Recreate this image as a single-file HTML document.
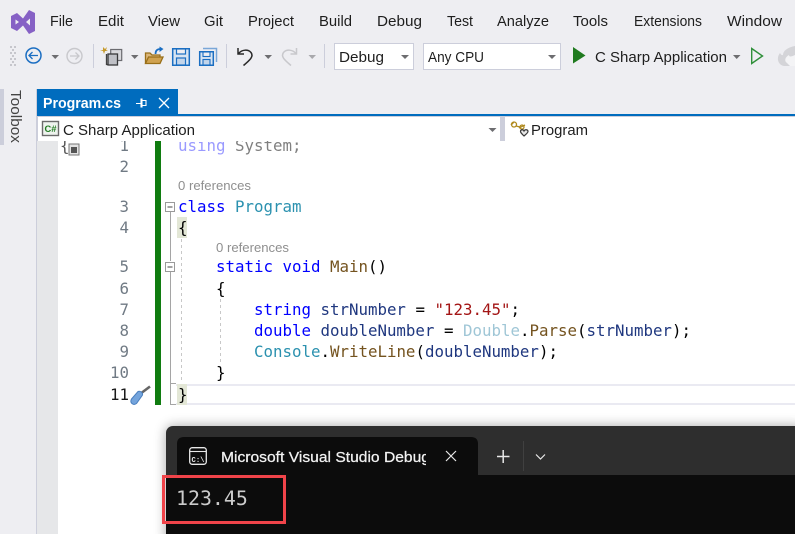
<!DOCTYPE html>
<html><head><meta charset="utf-8"><style>
html,body{margin:0;padding:0;width:795px;height:534px;overflow:hidden;background:#fff}
svg{display:block}
.u{font-family:"Liberation Sans",sans-serif;font-size:14.5px;fill:#1e1e1e}
.m{font-family:"DejaVu Sans Mono","Liberation Mono",monospace;font-size:15.78px}
.n{fill:#707a84;text-anchor:end}
.r{font-family:"Liberation Sans",sans-serif;font-size:12.5px;fill:#8f8f8f}
</style></head><body>
<svg width="795" height="534" viewBox="0 0 795 534" xmlns="http://www.w3.org/2000/svg">
<defs>
<filter id="sh" x="-10%" y="-30%" width="120%" height="160%"><feGaussianBlur stdDeviation="6"/></filter>
<clipPath id="codeclip"><rect x="37" y="141" width="758" height="393"/></clipPath>
<clipPath id="titleclip"><rect x="215" y="440" width="211" height="32"/></clipPath>
</defs>
<rect width="795" height="534" fill="#eeeef2"/>

<!-- menu -->
<g class="u">
<text x="50" y="26" textLength="23" lengthAdjust="spacingAndGlyphs">File</text>
<text x="98" y="26" textLength="26" lengthAdjust="spacingAndGlyphs">Edit</text>
<text x="148" y="26" textLength="32" lengthAdjust="spacingAndGlyphs">View</text>
<text x="204" y="26" textLength="19" lengthAdjust="spacingAndGlyphs">Git</text>
<text x="248" y="26" textLength="46" lengthAdjust="spacingAndGlyphs">Project</text>
<text x="319" y="26" textLength="33" lengthAdjust="spacingAndGlyphs">Build</text>
<text x="377" y="26" textLength="45" lengthAdjust="spacingAndGlyphs">Debug</text>
<text x="447" y="26" textLength="26" lengthAdjust="spacingAndGlyphs">Test</text>
<text x="497" y="26" textLength="52" lengthAdjust="spacingAndGlyphs">Analyze</text>
<text x="573" y="26" textLength="35" lengthAdjust="spacingAndGlyphs">Tools</text>
<text x="634" y="26" textLength="68" lengthAdjust="spacingAndGlyphs">Extensions</text>
<text x="727" y="26" textLength="55" lengthAdjust="spacingAndGlyphs">Window</text>
</g>

<!-- VS logo -->
<path d="M11 16 L17 13 L23 18.500 L29 10 L35 13 V31 L29 34 L23 25.500 L17 31 L11 28 Z M15.500 19.500 V24.500 L19 22 Z M26 22 L30 25.500 V18.500 Z" fill="#8661c5" fill-rule="evenodd"/>

<!-- grip -->
<g fill="#c6c6cc">
<rect x="10" y="46" width="2" height="2"/><rect x="14" y="46" width="2" height="2"/>
<rect x="12" y="49" width="2" height="2"/>
<rect x="10" y="52" width="2" height="2"/><rect x="14" y="52" width="2" height="2"/>
<rect x="12" y="55" width="2" height="2"/>
<rect x="10" y="58" width="2" height="2"/><rect x="14" y="58" width="2" height="2"/>
<rect x="12" y="61" width="2" height="2"/>
<rect x="10" y="64" width="2" height="2"/><rect x="14" y="64" width="2" height="2"/>
</g>

<!-- back / forward -->
<circle cx="33.5" cy="55.5" r="7.5" fill="none" stroke="#1b6ec2" stroke-width="1.5"/>
<path d="M38 55.5 H29 M32.5 52 L29 55.5 L32.5 59" fill="none" stroke="#1b6ec2" stroke-width="1.3"/>
<path d="M51.5 55 H59 L55.2 59 Z" fill="#6d6d70"/>
<circle cx="74.5" cy="56" r="7.5" fill="none" stroke="#c8c8cc" stroke-width="1.4"/>
<path d="M70 56 H79 M75.5 52.5 L79 56 L75.5 59.5" fill="none" stroke="#c8c8cc" stroke-width="1.3"/>
<rect x="93" y="44" width="1" height="24" fill="#cccedb"/>

<!-- new project -->
<path d="M103 47 l2 2 l2-2 l-1 3 l2 1 l-3 0 l-1 3 l-1-3 l-3 0 l3-1z" fill="#c69a2c"/>
<path d="M106.500 54 V64.500 H109" fill="none" stroke="#424242" stroke-width="1.300"/>
<rect x="110.700" y="49.500" width="11" height="11" fill="#d8d8dc" stroke="#6b6b70" stroke-width="1.200"/>
<rect x="108" y="54" width="9.500" height="11" fill="#bfc0c6" stroke="#38383a" stroke-width="1.300"/>
<path d="M131 55 H138.500 L134.700 59 Z" fill="#6d6d70"/>

<!-- open folder -->
<path d="M145.500 63.500 V53 H150 L152 55 H160 V57" fill="#dcb67a" stroke="#996f19" stroke-width="1.300"/>
<path d="M145.500 63.500 L148.500 57 H163 L160 63.500 Z" fill="#d0a250" stroke="#996f19" stroke-width="1.300"/>
<path d="M155.500 54 C155.500 50.500 157.500 49 160.500 49" fill="none" stroke="#1b6ec2" stroke-width="1.700"/>
<path d="M159.500 46.500 L163.500 49 L159.500 52 Z" fill="#1b6ec2"/>

<!-- save -->
<path d="M172.700 48.700 H189.300 V65.300 H172.700 Z" fill="#d7e4f2" stroke="#1b6ec2" stroke-width="1.500"/>
<rect x="176.500" y="49" width="9" height="5" fill="#eeeef2" stroke="#1b6ec2" stroke-width="1.200"/>
<rect x="176.500" y="58" width="9" height="7" fill="#c3d5ea" stroke="#1b6ec2" stroke-width="1.200"/>

<!-- save all -->
<path d="M203 48.500 H216.500 V62 " fill="none" stroke="#7aa7d8" stroke-width="1.500"/>
<path d="M199.700 51.700 H213.300 V65.300 H199.700 Z" fill="#d7e4f2" stroke="#1b6ec2" stroke-width="1.500"/>
<rect x="203" y="52" width="7" height="4.500" fill="#eeeef2" stroke="#1b6ec2" stroke-width="1.100"/>
<rect x="203" y="59.500" width="7" height="5.500" fill="#c3d5ea" stroke="#1b6ec2" stroke-width="1.100"/>
<rect x="226" y="44" width="1" height="24" fill="#cccedb"/>

<!-- undo -->
<path d="M238 48 V54 H244 M238.500 53.500 C242 49.500 248 49 251 52.500 C254 56.500 250 60 243.500 65.500" fill="none" stroke="#2a2a2a" stroke-width="1.500"/>
<path d="M264.500 55 H272 L268.200 59 Z" fill="#6d6d70"/>
<!-- redo -->
<path d="M296.500 48 V54 H290.500 M296 53.500 C292.500 49.500 286.500 49 283.500 52.500 C280.500 56.500 284.500 60 291 65.500" fill="none" stroke="#c8c8cc" stroke-width="1.500"/>
<path d="M308.500 55 H316 L312.200 59 Z" fill="#a8a8ac"/>
<rect x="324" y="44" width="1" height="24" fill="#cccedb"/>

<!-- combos -->
<rect x="334.500" y="43.500" width="79" height="26" fill="#fff" stroke="#cccedb"/>
<text class="u" x="339" y="62" textLength="45" lengthAdjust="spacingAndGlyphs">Debug</text>
<path d="M401 55 H409 L405 59 Z" fill="#6d6d70"/>
<rect x="423.500" y="43.500" width="137" height="26" fill="#fff" stroke="#cccedb"/>
<text class="u" x="428" y="62" textLength="56" lengthAdjust="spacingAndGlyphs">Any CPU</text>
<path d="M548 55 H556 L552 59 Z" fill="#6d6d70"/>

<!-- run -->
<path d="M573 47 L585.500 55.500 L573 63.500 Z" fill="#1f7a1f"/>
<text class="u" x="595" y="62" textLength="132" lengthAdjust="spacingAndGlyphs">C Sharp Application</text>
<path d="M733 55 H740.500 L736.700 59 Z" fill="#6d6d70"/>
<path d="M751.700 48.500 L762.500 56 L751.700 63.500 Z" fill="none" stroke="#2f8f3a" stroke-width="1.400"/>
<!-- flame -->
<path d="M784 66 C778 65 776 58 780 53 C781 55 782 55.500 783 55 C783 51 787 47.500 795 46 V66 Z" fill="#d4d4d8"/>
<path d="M787 63 C784 61 785 57 789 55 C789 57 791 57 795 55 V66 H790 Z" fill="#f4f4f6"/>

<!-- toolbox side -->
<rect x="0" y="89" width="4" height="56" fill="#cccedb"/>
<text class="u" transform="translate(11,90) rotate(90)" textLength="53" lengthAdjust="spacingAndGlyphs" style="fill:#444">Toolbox</text>
<rect x="36" y="89" width="1" height="445" fill="#cccedb"/>

<!-- tab -->
<rect x="37" y="89" width="141" height="25" fill="#006cbe"/>
<rect x="37" y="114" width="758" height="2" fill="#006cbe"/>
<rect x="37" y="116" width="758" height="25" fill="#cccedb"/>
<text x="43" y="108" font-family="Liberation Sans,sans-serif" font-weight="700" font-size="14.500" fill="#fff" textLength="78" lengthAdjust="spacingAndGlyphs">Program.cs</text>
<path d="M136 103.500 H141 M141 99 V107 H142 V99 Z M142 100.500 H146 V105.500 H142" fill="none" stroke="#fff" stroke-width="1.100"/>
<path d="M159 98 L169 108 M169 98 L159 108" stroke="#fff" stroke-width="1.300"/>

<!-- nav bar -->
<rect x="38" y="117" width="462" height="24" fill="#fff"/>
<rect x="505" y="117" width="290" height="24" fill="#fff"/>
<rect x="42.500" y="121.500" width="16" height="14" fill="#eef3ee" stroke="#6b6b6b" stroke-width="1.400"/>
<text x="44.500" y="132" font-family="Liberation Sans,sans-serif" font-weight="700" font-size="9.500" fill="#1f7a1f" textLength="12" lengthAdjust="spacingAndGlyphs">C#</text>
<text class="u" x="63" y="135" textLength="132" lengthAdjust="spacingAndGlyphs">C Sharp Application</text>
<path d="M488.500 128 H496.500 L492.500 132 Z" fill="#6d6d70"/>
<g fill="none" stroke="#b08a1e" stroke-width="1.300">
<circle cx="514" cy="124.500" r="2.500"/><circle cx="522" cy="127" r="2"/>
<path d="M516 126 L520 127 M514 122 L511 125 M519 128 L525 125"/>
</g>
<path d="M524 136 C521 133 520.500 132.500 520.500 131.500 C520.500 129.500 523 129 524 131 C525 129 528 129.500 528 131.500 C528 132.500 527 133.500 524 136 Z" fill="#e8e8e8" stroke="#3a3a3a" stroke-width="1.200"/>
<text class="u" x="531" y="135" textLength="57" lengthAdjust="spacingAndGlyphs">Program</text>

<!-- editor -->
<g clip-path="url(#codeclip)">
<rect x="37" y="141" width="21" height="393" fill="#e6e7e9"/>
<rect x="58" y="141" width="737" height="393" fill="#fff"/>
<rect x="155" y="141" width="6" height="264" fill="#107c10"/>

<!-- current line -->
<rect x="176" y="384" width="619" height="2" fill="#eaeaf2"/>
<rect x="176" y="403" width="619" height="2" fill="#eaeaf2"/>
<rect x="177" y="384" width="10" height="21" fill="#e3e7d6"/>
<rect x="177" y="217" width="10" height="21" fill="#e3e7d6"/>

<!-- outlining -->
<rect x="165.500" y="202.500" width="9" height="9" fill="#fff" stroke="#9a9a9a"/>
<path d="M167.500 207 H172.500" stroke="#444"/>
<path d="M170.500 212 V261" stroke="#a5a5a5"/>
<rect x="165.500" y="262.500" width="9" height="9" fill="#fff" stroke="#9a9a9a"/>
<path d="M167.500 267 H172.500" stroke="#444"/>
<path d="M170.500 272 V404.500 H176 M170.500 383.500 H176" fill="none" stroke="#a5a5a5"/>
<path d="M181.500 239 V382" stroke="#c8c8c8" stroke-dasharray="3 3"/>
<path d="M220.500 299 V363" stroke="#c8c8c8" stroke-dasharray="3 3"/>

<!-- line numbers -->
<g class="m n">
<text x="129" y="151">1</text>
<text x="129" y="172">2</text>
<text x="129" y="212">3</text>
<text x="129" y="233">4</text>
<text x="129" y="272">5</text>
<text x="129" y="294">6</text>
<text x="129" y="315">7</text>
<text x="129" y="336">8</text>
<text x="129" y="357">9</text>
<text x="129" y="378">10</text>
<text x="129" y="400" style="fill:#1a1a1a">11</text>
</g>

<!-- collapsed usings -->
<text class="m" x="60" y="151" style="fill:#555">{</text>
<rect x="69" y="144" width="10" height="11" fill="#e4e4e4" stroke="#777"/>
<rect x="71" y="147" width="6" height="6" fill="#555"/>

<!-- code -->
<g class="m" xml:space="preserve">
<text x="178" y="151"><tspan fill="#9a9aff">using</tspan><tspan fill="#808080" x="235">System;</tspan></text>
<text class="r" x="178" y="190" textLength="73" lengthAdjust="spacingAndGlyphs">0 references</text>
<text x="178" y="212"><tspan fill="#0000ff">class</tspan><tspan fill="#2b91af" x="235">Program</tspan></text>
<text x="178" y="233" fill="#000">{</text>
<text class="r" x="216" y="252" textLength="73" lengthAdjust="spacingAndGlyphs">0 references</text>
<text x="216" y="272"><tspan fill="#0000ff">static</tspan><tspan fill="#0000ff" x="282.500">void</tspan><tspan fill="#74531f" x="330">Main</tspan><tspan fill="#000" x="368">()</tspan></text>
<text x="216" y="294" fill="#000">{</text>
<text x="254" y="315"><tspan fill="#0000ff">string</tspan><tspan fill="#1f377f" x="320.500">strNumber</tspan><tspan fill="#000" x="415.500">=</tspan><tspan fill="#a31515" x="434.500">"123.45"</tspan><tspan fill="#000" x="510.500">;</tspan></text>
<text x="254" y="336"><tspan fill="#0000ff">double</tspan><tspan fill="#1f377f" x="320.500">doubleNumber</tspan><tspan fill="#000" x="444">=</tspan><tspan fill="#9fc6d6" x="463">Double</tspan><tspan fill="#000" x="520">.</tspan><tspan fill="#74531f" x="529.500">Parse</tspan><tspan fill="#000" x="577">(</tspan><tspan fill="#1f377f" x="586.500">strNumber</tspan><tspan fill="#000" x="672">);</tspan></text>
<text x="254" y="357"><tspan fill="#2b91af">Console</tspan><tspan fill="#000" x="320.500">.</tspan><tspan fill="#74531f" x="330">WriteLine</tspan><tspan fill="#000" x="415.500">(</tspan><tspan fill="#1f377f" x="425">doubleNumber</tspan><tspan fill="#000" x="539">);</tspan></text>
<text x="216" y="378" fill="#000">}</text>
<text x="178" y="400" fill="#000">}</text>
</g>

<!-- screwdriver -->
<path d="M140 394 L150 386.500" stroke="#666" stroke-width="2.600"/>
<path d="M131.500 399 L138 391.500 C140 390.500 143 392.500 142.500 395 L136.500 403.500 C133 406 129.500 402.500 131.500 399 Z" fill="#74a4dc" stroke="#4a7fbe"/>
</g>

<!-- terminal -->
<rect x="166" y="426" width="640" height="120" rx="7" fill="#000" opacity=".35" filter="url(#sh)"/>
<rect x="166" y="426" width="640" height="120" rx="7" fill="#2e2e2e"/>
<path d="M166 475 H795 V534 H166 Z" fill="#0c0c0c"/>
<path d="M177 475 V444 Q177 437 184 437 H471 Q478 437 478 444 V475 Z" fill="#0c0c0c"/>
<rect x="189.700" y="447.700" width="16.600" height="16.600" rx="2.500" fill="none" stroke="#e8e8e8" stroke-width="1.300"/>
<path d="M190 451.500 H206" stroke="#e8e8e8" stroke-width="1.100"/>
<text x="191.500" y="462" font-family="Liberation Mono,monospace" font-size="7.500" font-weight="700" fill="#e8e8e8" textLength="13" lengthAdjust="spacingAndGlyphs">C:\</text>
<g clip-path="url(#titleclip)">
<text x="221" y="462" font-family="Liberation Sans,sans-serif" font-size="14.500" font-weight="400" fill="#f2f2f2" textLength="209" lengthAdjust="spacingAndGlyphs" stroke="#f2f2f2" stroke-width=".25">Microsoft Visual Studio Debug</text>
</g>
<path d="M446 451 L456 461 M456 451 L446 461" stroke="#e8e8e8" stroke-width="1.200"/>
<path d="M497 456.500 H509.500 M503.200 450 V463" stroke="#e8e8e8" stroke-width="1.500"/>
<rect x="523" y="441" width="1" height="30" fill="#404040"/>
<path d="M536 454.500 L540.500 459 L545 454.500" fill="none" stroke="#e8e8e8" stroke-width="1.200"/>
<text x="176" y="505" font-family="DejaVu Sans Mono,monospace" font-size="19.900" fill="#cccccc">123.45</text>
<rect x="163.500" y="476.500" width="121" height="46" fill="none" stroke="#f0444a" stroke-width="3"/>
</svg>
</body></html>
